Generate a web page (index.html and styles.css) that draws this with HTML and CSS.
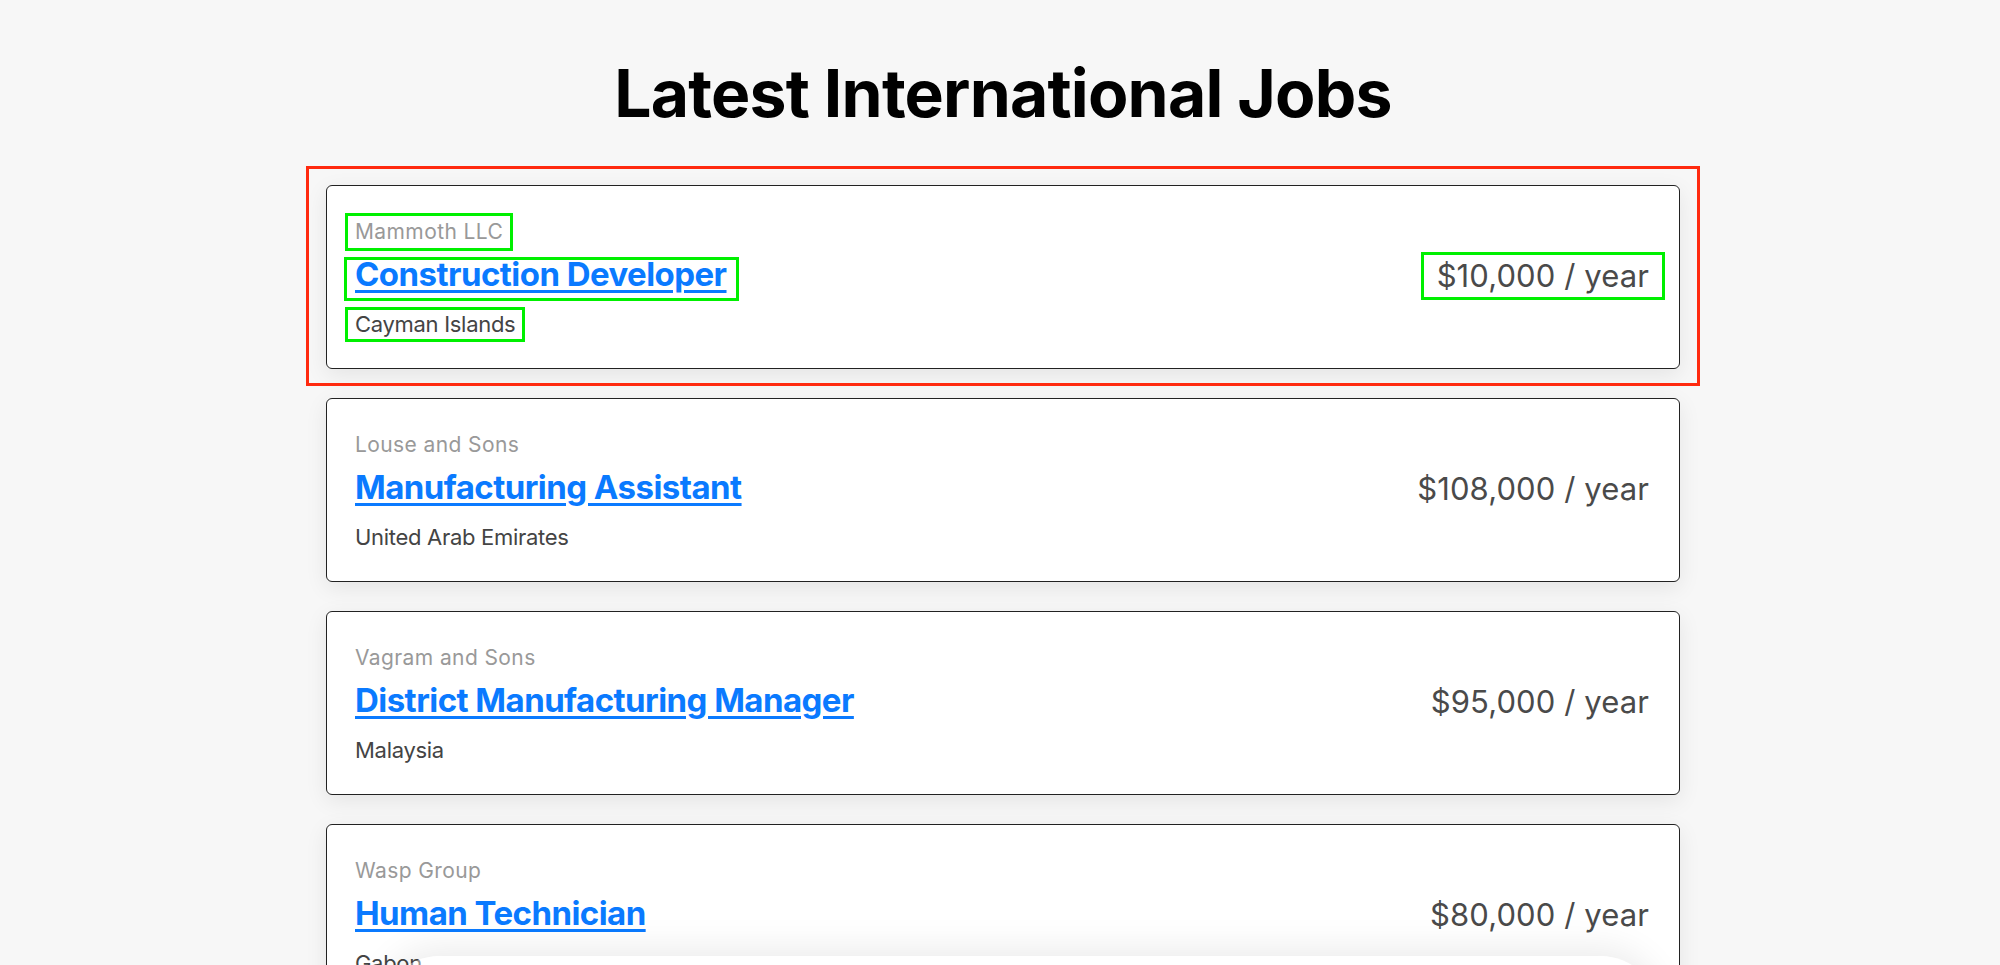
FILE: index.html
```html
<!DOCTYPE html>
<html lang="en">
<head>
    <meta charset="UTF-8">
    <meta name="viewport" content="width=device-width, initial-scale=1.0">
    <title>Latest International Jobs</title>
    <link rel="stylesheet" href="styles.css">
</head>
<body>
    <main class="jobs">
        <h1 class="jobs-title">Latest International Jobs</h1>
        <ul class="job-list">
            <li class="job-card is-selected">
                <div class="job-info">
                    <span class="job-company hl">Mammoth LLC</span>
                    <a class="job-name hl" href="#">Construction Developer</a>
                    <span class="job-location hl">Cayman Islands</span>
                </div>
                <span class="job-salary hl">$10,000 / year</span>
            </li>
            <li class="job-card">
                <div class="job-info">
                    <span class="job-company">Louse and Sons</span>
                    <a class="job-name" href="#">Manufacturing Assistant</a>
                    <span class="job-location">United Arab Emirates</span>
                </div>
                <span class="job-salary">$108,000 / year</span>
            </li>
            <li class="job-card">
                <div class="job-info">
                    <span class="job-company">Vagram and Sons</span>
                    <a class="job-name" href="#">District Manufacturing Manager</a>
                    <span class="job-location">Malaysia</span>
                </div>
                <span class="job-salary">$95,000 / year</span>
            </li>
            <li class="job-card">
                <div class="job-info">
                    <span class="job-company">Wasp Group</span>
                    <a class="job-name" href="#">Human Technician</a>
                    <span class="job-location">Gabon</span>
                </div>
                <span class="job-salary">$80,000 / year</span>
            </li>
        </ul>
    </main>
    <!-- panel peeking up from below the fold -->
    <div class="bottom-sheet"></div>
</body>
</html>
```

FILE: styles.css
```css
body {
    margin: 0;
    padding: 53px 0 0 6px;
    font-family: Inter, "Noto Sans", sans-serif;
    background-color: #f7f7f7;
    color: #444;
}
.jobs {
    width: 1354px;
    margin: 0 auto;
}
.jobs-title {
    margin: 0 0 52px;
    text-align: center;
    font-size: 66px;
    font-weight: 700;
    letter-spacing: -0.8px;
    line-height: 80px;
    color: #000;
}
.job-list {
    list-style: none;
    margin: 0;
    padding: 0;
    display: flex;
    flex-direction: column;
    gap: 29px;
}
.job-card {
    position: relative;
    display: flex;
    align-items: center;
    justify-content: space-between;
    height: 184px;
    box-sizing: border-box;
    padding: 4px 30px 0 28px;
    background-color: #fff;
    border: 1px solid #222;
    border-radius: 6px;
    box-shadow: 0 6px 22px rgba(0, 0, 0, 0.08);
}
/* selection frame round the first card */
.job-card.is-selected::before {
    content: "";
    position: absolute;
    inset: -20px -21px -18px -21px;
    border: 3px solid #ff2a0f;
    pointer-events: none;
}
.job-info {
    display: flex;
    flex-direction: column;
    align-items: flex-start;
}
.job-company {
    font-size: 21px;
    line-height: 24px;
    letter-spacing: 0.4px;
    color: #999;
}
.job-name {
    margin: 10px 0 16px;
    font-size: 33px;
    line-height: 41px;
    font-weight: 700;
    letter-spacing: -0.55px;
    color: #0a7aff;
    text-decoration-thickness: 3px;
    text-underline-offset: 4px;
}
.job-location {
    font-size: 22px;
    line-height: 27px;
    letter-spacing: -0.3px;
    color: #444;
}
.job-salary {
    margin-bottom: 6px;
    font-size: 31px;
    line-height: 36px;
    letter-spacing: 0.1px;
    color: #4a4a4a;
}
/* debug highlight boxes */
.hl {
    position: relative;
}
.hl::after {
    content: "";
    position: absolute;
    inset: -7px -10px;
    border: 3px solid #00f000;
    pointer-events: none;
}
.job-name.hl::after {
    inset: 3px -12px -6px -11px;
}
.job-location.hl::after {
    inset: -4px -10px;
}
.job-salary.hl::after {
    inset: -6px -16px;
}
.bottom-sheet {
    position: fixed;
    left: 380px;
    right: 340px;
    top: 956px;
    height: 200px;
    background: rgba(255, 255, 255, 0.4);
    border-radius: 60px;
    box-shadow: 0 -8px 34px rgba(0, 0, 0, 0.08);
}
```
